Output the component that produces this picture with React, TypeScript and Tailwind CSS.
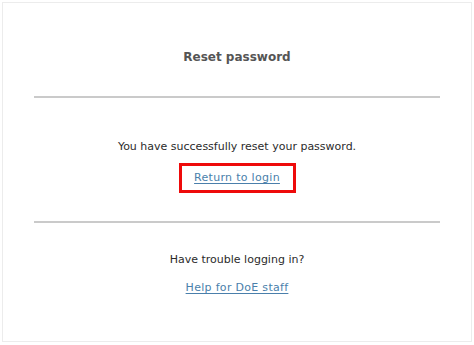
const App = () => {
  return (
    <div className="w-[474px] h-[345px] bg-white p-[2px] font-['DejaVu_Sans',sans-serif]">
      <div className="h-[340px] border border-[#ececec] flex flex-col items-center pt-[46px]">
        <h1 className="text-[12px] leading-4 font-bold text-[#555]">Reset password</h1>
        <div className="w-[406px] h-[2px] bg-[#cacaca] mt-[31px]" />
        <p className="mt-[41px] text-[11px] leading-4 text-[#2b2b2b]">
          You have successfully reset your password.
        </p>
        <div className="mt-[8px] w-[117px] h-[30px] border-[3px] border-[#ee0a0a] flex items-center justify-center">
          <a href="#" className="text-[11px] leading-4 tracking-[0.3px] text-[#4a7fab] underline underline-offset-2">
            Return to login
          </a>
        </div>
        <div className="w-[406px] h-[2px] bg-[#cacaca] mt-[28px]" />
        <p className="mt-[29px] text-[11px] leading-4 text-[#2b2b2b]">Have trouble logging in?</p>
        <a href="#" className="mt-[12px] text-[11px] leading-4 tracking-[0.3px] text-[#4a7fab] underline underline-offset-2">
          Help for DoE staff
        </a>
      </div>
    </div>
  )
}

export default App
